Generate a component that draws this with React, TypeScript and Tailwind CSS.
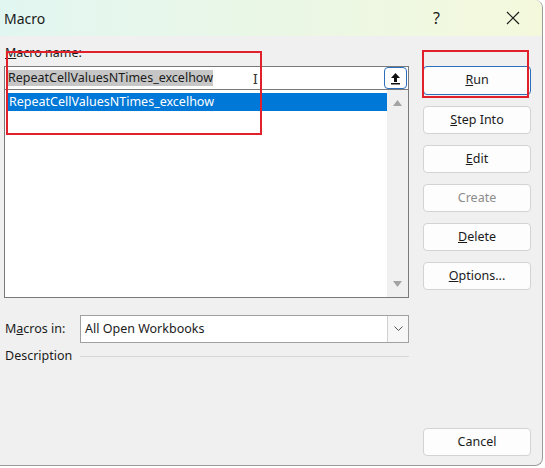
import React from 'react';

const font = { fontFamily: '"Noto Sans", "Open Sans", sans-serif' };

const Btn = ({ children, primary, disabled }: { children: React.ReactNode; primary?: boolean; disabled?: boolean }) => (
  <div
    className={`h-[28px] w-[108px] flex items-center justify-center rounded-[4px] bg-[#fdfdfd] text-[12.5px] ${
      primary ? 'border border-[#2d6fb8]' : 'border border-[#d3d3d3]'
    } ${disabled ? 'text-[#8c8c8c]' : 'text-[#1b1b1b]'}`}
  >
    {children}
  </div>
);

export default function App() {
  return (
    <div style={font} className="relative w-[545px] h-[468px] overflow-hidden bg-white">
      <div className="w-[543px] h-[466px] bg-[#f0f0f0] rounded-br-[8px] rounded-tr-[8px] border-r border-b border-[#9a9a9a] flex flex-col">
        {/* title bar */}
        <div className="h-[36px] flex items-center bg-gradient-to-r from-[#e2f6f1] via-[#eaf7e6] to-[#f4f9dc] rounded-tr-[8px]">
          <span className="ml-[4px] text-[14px] text-[#1a1a1a]">Macro</span>
          <span className="ml-auto mr-[66px] text-[16px] text-[#1a1a1a]">?</span>
          <svg width="14" height="14" viewBox="0 0 14 14" className="mr-[22px]">
            <path d="M1 1 L13 13 M13 1 L1 13" stroke="#1a1a1a" strokeWidth="1.2" />
          </svg>
        </div>

        <div className="flex flex-1">
          {/* left column */}
          <div className="ml-[4px] w-[405px] flex flex-col">
            <div className="h-[30px] pt-[9px] pl-[1px] text-[12.5px] leading-[16px] text-[#1b1b1b]">
              <span className="underline">M</span>acro name:
            </div>
            <div className="h-[24px] bg-white border border-[#7a7a7a] flex items-center pl-[3px] pr-[1px]">
              <span className="bg-[#c6c6c6] text-[12.5px] leading-[16px] text-[#1b1b1b]">RepeatCellValuesNTimes_excelhow</span>
              <span className="ml-[40px] text-[14px] text-[#333]">I</span>
              <div className="ml-auto h-[22px] w-[23px] border border-[#2d6fb8] rounded-[4px] bg-white flex items-center justify-center">
                <svg width="11" height="13" viewBox="0 0 11 13">
                  <path d="M5.5 1 L1 6 H4 V10 H7 V6 H10 Z" fill="#111" />
                  <rect x="1" y="11" width="9" height="1.5" fill="#111" />
                </svg>
              </div>
            </div>
            <div className="h-[208px] bg-white border border-t-0 border-[#7a7a7a] flex">
              <div className="flex-1 pt-[3px] pl-[1px]">
                <div className="h-[18px] bg-[#0078d7] text-white text-[12.5px] leading-[18px] pl-[3px]">
                  RepeatCellValuesNTimes_excelhow
                </div>
              </div>
              <div className="w-[21px] bg-[#f0f0f0] flex flex-col items-center justify-between py-[10px]">
                <svg width="9" height="6" viewBox="0 0 9 6">
                  <path d="M4.5 0 L9 6 H0 Z" fill="#a3a3a3" />
                </svg>
                <svg width="9" height="6" viewBox="0 0 9 6">
                  <path d="M0 0 H9 L4.5 6 Z" fill="#a3a3a3" />
                </svg>
              </div>
            </div>

            <div className="mt-[17px] h-[28px] flex items-center">
              <span className="w-[76px] pl-[1px] text-[12.5px] text-[#1b1b1b]">
                M<span className="underline">a</span>cros in:
              </span>
              <div className="flex-1 h-[28px] bg-white border border-[#a0a0a0] flex items-center pl-[4px]">
                <span className="text-[12.5px] text-[#1b1b1b]">All Open Workbooks</span>
                <div className="ml-auto h-full w-[21px] border-l border-[#d0d0d0] bg-[#f7f7f7] flex items-center justify-center">
                  <svg width="9" height="6" viewBox="0 0 9 6">
                    <path d="M0.5 0.5 L4.5 4.5 L8.5 0.5" stroke="#555" strokeWidth="1" fill="none" />
                  </svg>
                </div>
              </div>
            </div>

            <div className="mt-[4px] flex items-center">
              <span className="pl-[1px] text-[12.5px] text-[#1b1b1b]">Description</span>
              <div className="ml-[8px] flex-1 h-px bg-[#d8d8d8]" />
            </div>
          </div>

          {/* right column */}
          <div className="ml-[14px] pt-[30px] flex flex-col">
            <div className="h-[29px] w-[108px] flex items-center justify-center rounded-[4px] bg-[#fdfdfd] border border-[#2d6fb8] text-[12.5px] text-[#1b1b1b]">
              <span className="underline">R</span>un
            </div>
            <div className="mt-[11px] flex flex-col gap-[11px]">
              <Btn><span className="underline">S</span>tep Into</Btn>
              <Btn><span className="underline">E</span>dit</Btn>
              <Btn disabled>Create</Btn>
              <Btn><span className="underline">D</span>elete</Btn>
              <Btn><span className="underline">O</span>ptions...</Btn>
            </div>
            <div className="mt-[138px]">
              <Btn>Cancel</Btn>
            </div>
          </div>
        </div>
      </div>

      {/* red annotation boxes */}
      <div className="absolute left-[6px] top-[51px] w-[256px] h-[84px] border-2 border-[#e0202a]" />
      <div className="absolute left-[422px] top-[50px] w-[107px] h-[48px] border-2 border-[#e0202a]" />
    </div>
  );
}
